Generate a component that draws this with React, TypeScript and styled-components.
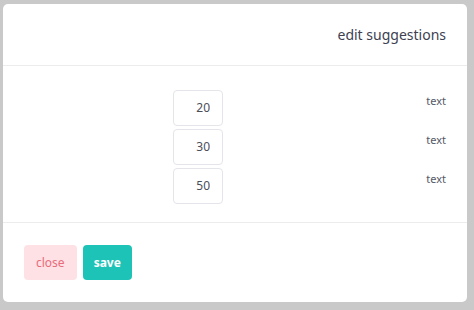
import styled, { createGlobalStyle } from 'styled-components';

const GlobalStyle = createGlobalStyle`
  html, body {
    margin: 0;
    padding: 0;
    background: #c9c9c9;
    font-family: "Noto Sans", "Open Sans", sans-serif;
  }
`

const Backdrop = styled.div`
  width: 474px;
  height: 310px;
  box-sizing: border-box;
  padding: 4px 7px 8px 3px;
  background: #c9c9c9;
`

const Modal = styled.div`
  height: 100%;
  background: #fff;
  border-radius: 5px;
  display: flex;
  flex-direction: column;
  overflow: hidden;
`

const Header = styled.div`
  height: 62px;
  box-sizing: border-box;
  padding: 0 21px;
  display: flex;
  align-items: center;
  justify-content: flex-end;
  border-bottom: 1px solid #ececee;
`

const Title = styled.h3`
  margin: 0;
  font-size: 14px;
  font-weight: 400;
  color: #3d4152;
`

const Body = styled.div`
  height: 158px;
  box-sizing: border-box;
  padding: 24px 21px 0 170px;
  border-bottom: 1px solid #ececee;
  display: flex;
  flex-direction: column;
  gap: 3px;
`

const Row = styled.div`
  display: flex;
  justify-content: space-between;
  align-items: flex-start;
`

const NumberInput = styled.input`
  width: 50px;
  height: 36px;
  box-sizing: border-box;
  border: 1px solid #e4e5ea;
  border-radius: 4px;
  padding: 0 12px;
  text-align: right;
  font-family: inherit;
  font-size: 12px;
  color: #4a4d5a;
  outline: none;
`

const Label = styled.span`
  font-size: 11px;
  color: #555966;
  margin-top: 3px;
`

const Footer = styled.div`
  padding: 22px 21px;
  display: flex;
  gap: 6px;
`

const Button = styled.button<{ $variant: 'close' | 'save' }>`
  height: 35px;
  border: none;
  border-radius: 4px;
  padding: 0 ${p => (p.$variant === 'close' ? 12 : 11)}px;
  font-family: inherit;
  font-size: 12px;
  font-weight: ${p => (p.$variant === 'close' ? 400 : 700)};
  background: ${p => (p.$variant === 'close' ? '#fde1e5' : '#1dc3b6')};
  color: ${p => (p.$variant === 'close' ? '#ea6b7b' : '#ffffff')};
  cursor: pointer;
`

const values = ['20', '30', '50'];

export default function App() {
  return (
    <>
      <GlobalStyle />
      <Backdrop>
        <Modal>
          <Header>
            <Title>edit suggestions</Title>
          </Header>
          <Body>
            {values.map(v => (
              <Row key={v}>
                <NumberInput defaultValue={v} />
                <Label>text</Label>
              </Row>
            ))}
          </Body>
          <Footer>
            <Button $variant="close">close</Button>
            <Button $variant="save">save</Button>
          </Footer>
        </Modal>
      </Backdrop>
    </>
  )
}
